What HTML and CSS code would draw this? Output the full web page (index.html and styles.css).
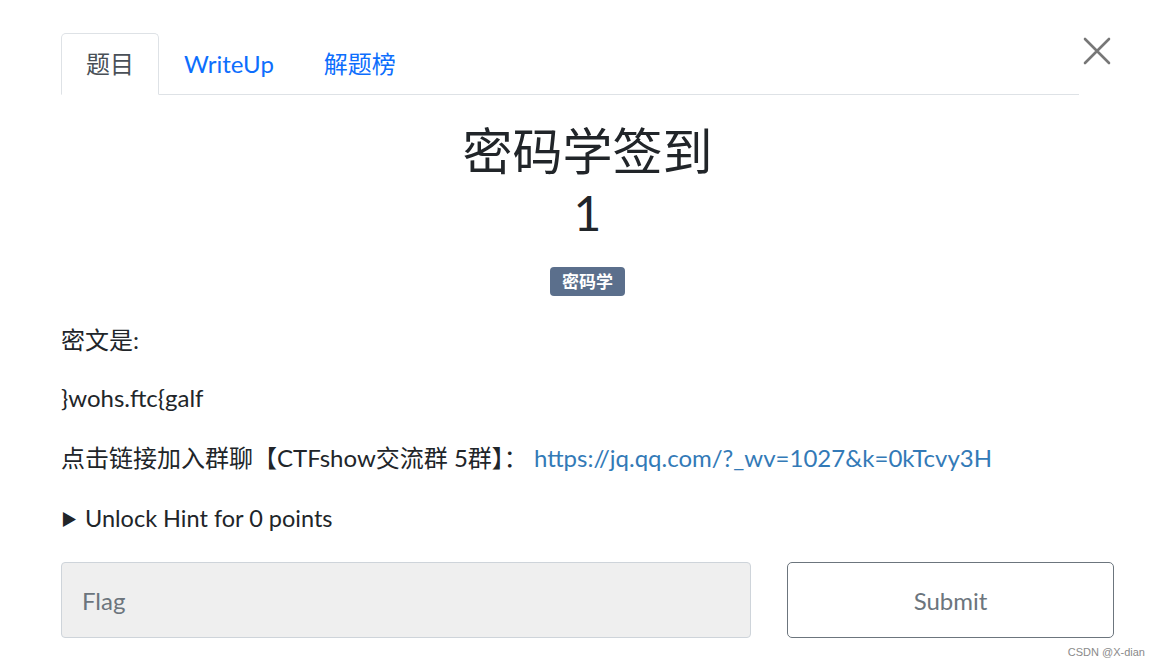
FILE: index.html
```html
<!DOCTYPE html>
<html lang="zh-CN">
<head>
    <meta charset="UTF-8">
    <meta name="viewport" content="width=device-width, initial-scale=1.0">
    <title>密码学签到</title>
    <link rel="stylesheet" href="styles.css">
</head>
<body>
    <div class="challenge">
        <div class="tab-row">
            <ul class="tabs">
                <li class="tab active">题目</li>
                <li class="tab">WriteUp</li>
                <li class="tab">解题榜</li>
            </ul>
            <button class="close" aria-label="Close">
                <svg width="28" height="28" viewBox="0 0 28 28">
                    <path d="M2 2 L26 26 M26 2 L2 26" stroke="#777" stroke-width="2.6" fill="none" stroke-linecap="round"/>
                </svg>
            </button>
        </div>

        <h1 class="title">密码学签到</h1>
        <h2 class="points">1</h2>
        <div class="tags"><span class="badge">密码学</span></div>

        <div class="description">
            <p>密文是:</p>
            <p>}wohs.ftc{galf</p>
            <p>点击链接加入群聊【CTFshow交流群 5群】： <a href="#">https://jq.qq.com/?_wv=1027&amp;k=0kTcvy3H</a></p>
        </div>

        <details class="hint">
            <summary>Unlock Hint for 0 points</summary>
        </details>

        <form class="flag-form" action="#" onsubmit="event.preventDefault();">
            <input type="text" class="flag-input" placeholder="Flag">
            <input type="submit" class="flag-submit" value="Submit">
        </form>
    </div>

    <div class="watermark">CSDN @X-dian</div>
</body>
</html>
```

FILE: styles.css
```css
*{
    margin: 0;
    padding: 0;
    box-sizing: border-box;
}
body{
    font-family: Lato, "Noto Sans CJK SC", sans-serif;
    color: #212529;
    background: white;
}
.challenge{
    width: 1053px;
    margin-left: 61px;
    padding-top: 33px;
}
.tab-row{
    display: flex;
    align-items: flex-start;
}
.tabs{
    list-style: none;
    display: flex;
    width: 1018px;
    border-bottom: 1px solid #dee2e6;
}
.tab{
    padding: 0 24px;
    height: 62px;
    line-height: 60px;
    font-size: 24px;
    color: #0d6efd;
    border: 1px solid transparent;
    border-top-left-radius: 5px;
    border-top-right-radius: 5px;
    margin-bottom: -1px;
}
.tab.active{
    color: #495057;
    border-color: #dee2e6 #dee2e6 white;
}
.close{
    border: none;
    background: none;
    margin: 4px 0 0 4px;
    width: 28px;
    height: 28px;
}
.title{
    text-align: center;
    font-size: 50px;
    font-weight: 400;
    line-height: 60px;
    margin-top: 26px;
}
.points{
    text-align: center;
    font-size: 48px;
    font-weight: 400;
    line-height: 58px;
    margin-top: 3px;
}
.tags{
    text-align: center;
    margin-top: 25px;
}
.badge{
    display: inline-block;
    background-color: #5b6f8c;
    color: white;
    font-weight: bold;
    font-size: 17px;
    line-height: 29px;
    padding: 0 12px;
    border-radius: 4px;
}
.description{
    margin-top: 27px;
    font-size: 24px;
}
.description p{
    line-height: 34px;
    margin-bottom: 26px;
}
.description p:first-child{
    margin-bottom: 24px;
}
.description a{
    color: #337ab7;
    text-decoration: none;
}
.hint{
    font-size: 23.5px;
    line-height: 34px;
}
.hint summary{
    cursor: pointer;
    list-style: none;
}
.hint summary::before{
    content: "\25B6";
    font-size: 16px;
    margin-right: 8px;
    vertical-align: 2px;
}
.flag-form{
    display: flex;
    justify-content: space-between;
    margin-top: 26px;
}
.flag-input{
    width: 690px;
    height: 76px;
    background-color: #efefef;
    border: 1px solid #ced4da;
    border-radius: 4px;
    padding: 0 20px;
    font-family: Lato, sans-serif;
    font-size: 24px;
    color: #495057;
}
.flag-input::placeholder{
    color: #6c757d;
}
.flag-submit{
    width: 327px;
    height: 76px;
    background: white;
    border: 1px solid #6c757d;
    border-radius: 5px;
    font-family: Lato, sans-serif;
    font-size: 24px;
    color: #6c757d;
    cursor: pointer;
}
.watermark{
    position: absolute;
    right: 14px;
    top: 646px;
    font-family: "Liberation Sans", Arial, sans-serif;
    font-size: 11px;
    color: #8a8a8a;
}
```
